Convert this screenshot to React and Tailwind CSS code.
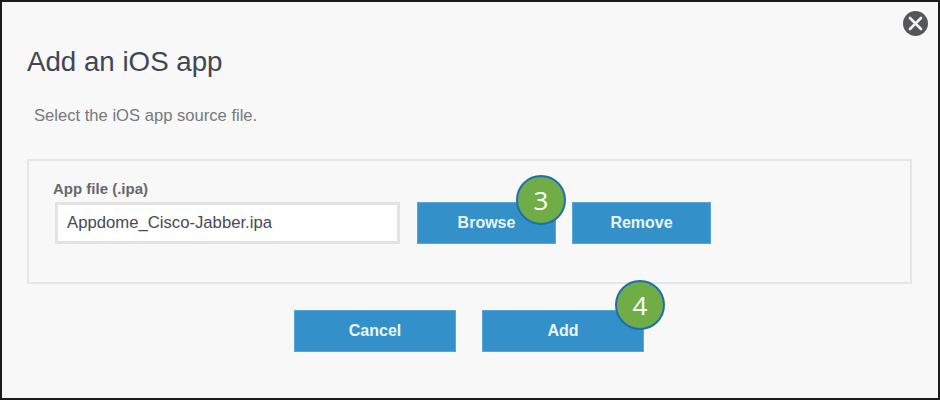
const font = "font-['Liberation_Sans',Arial,sans-serif]";

function Badge({ n, className }) {
  return (
    <div className={`absolute flex h-[50px] w-[50px] items-center justify-center rounded-full border-2 border-[#1f6fb0] bg-[#70ad47] font-['Open_Sans',sans-serif] text-[26px] font-medium leading-none text-white ${className}`}>
      {n}
    </div>
  );
}

function Button({ children, className = '', badge }) {
  return (
    <div className={`relative flex h-[42px] items-center justify-center border border-[#5aa5d6] bg-[#3390c9] text-[16px] font-bold text-[#eaf4fa] ${className}`}>
      {children}
      {badge}
    </div>
  );
}

export default function App() {
  return (
    <div className={`relative h-[400px] w-[940px] border-2 border-[#1c1c1c] bg-[#f8f8f8] ${font}`}>
      {/* close */}
      <svg className="absolute right-[10px] top-[9px]" width="25" height="25" viewBox="0 0 25 25">
        <circle cx="12.5" cy="12.5" r="12.5" fill="#55565a" />
        <path d="M7 7l11 11M18 7L7 18" stroke="#f4f4f4" strokeWidth="2.6" strokeLinecap="round" />
      </svg>

      <div className="pl-[25px] pt-[43px]">
        <h1 className="text-[27.7px] font-normal leading-[34px] text-[#404652]">Add an iOS app</h1>
        <p className="mt-[27px] pl-[7px] text-[16.6px] leading-[20px] text-[#76787c]">Select the iOS app source file.</p>
      </div>

      <div className="ml-[25px] mt-[33px] h-[125px] w-[885px] border-2 border-[#e6e6e6] px-[24px] pt-[19px]">
        <div className="text-[15px] font-bold leading-[18px] text-[#66686c]">App file (.ipa)</div>
        <div className="ml-[2px] mt-[4px] flex gap-[16px]">
          <div className="flex h-[42px] w-[345px] items-center border-[3px] border-[#e3e3e3] bg-white pl-[9px] text-[16.7px] text-[#454a56]">
            Appdome_Cisco-Jabber.ipa
          </div>
          <Button className="ml-[1px] w-[139px]" badge={<Badge n="3" className="left-[98px] top-[-28px]" />}>
            Browse
          </Button>
          <Button className="w-[139px]">Remove</Button>
        </div>
      </div>

      <div className="mt-[26px] flex gap-[26px] pl-[292px]">
        <Button className="w-[162px]">Cancel</Button>
        <Button className="w-[162px]" badge={<Badge n="4" className="left-[132px] top-[-31px]" />}>Add</Button>
      </div>
    </div>
  );
}
